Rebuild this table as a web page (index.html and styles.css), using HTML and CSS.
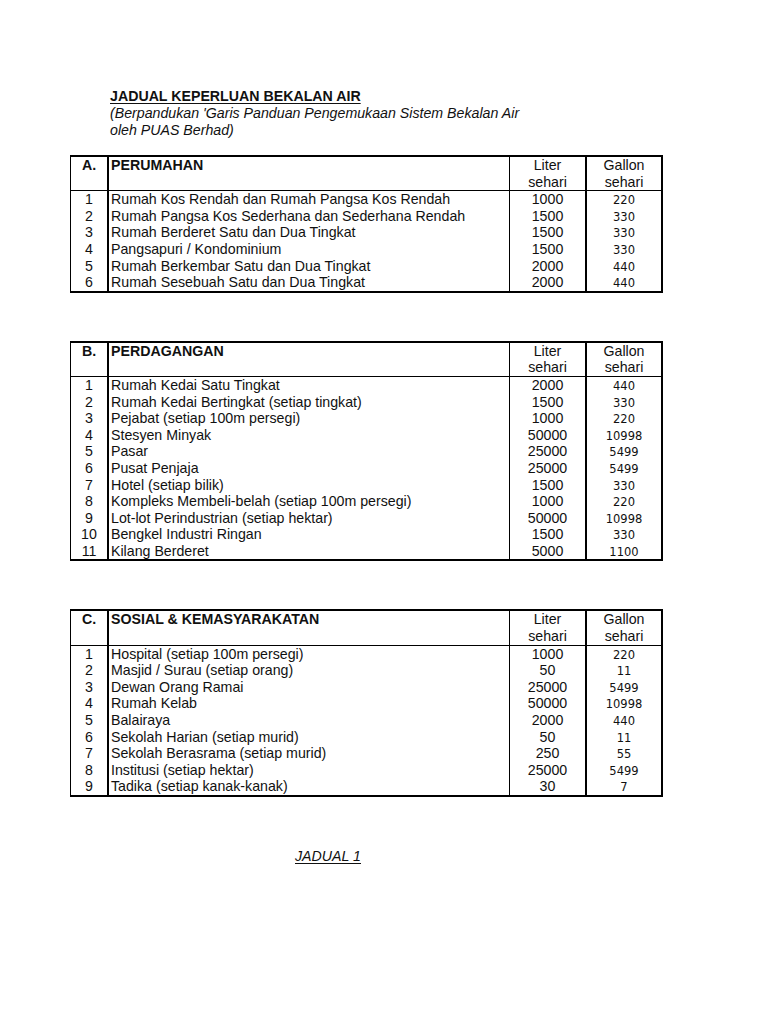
FILE: index.html
```html
<!DOCTYPE html>
<html lang="ms">
<head>
<meta charset="utf-8">
<title>Jadual Keperluan Bekalan Air</title>
<link rel="stylesheet" href="styles.css">
</head>
<body>
<div class="page">
  <div class="intro">
    <div class="title">JADUAL KEPERLUAN BEKALAN AIR</div>
    <div class="subtitle">(Berpandukan 'Garis Panduan Pengemukaan Sistem Bekalan Air<br>oleh PUAS Berhad)</div>
  </div>

  <table class="water">
    <thead>
      <tr>
        <th class="num">A.</th>
        <th class="desc">PERUMAHAN</th>
        <td class="lit">Liter<br>sehari</td>
        <td class="gal-h">Gallon<br>sehari</td>
      </tr>
    </thead>
    <tbody>
      <tr><td class="num">1</td><td class="desc">Rumah Kos Rendah dan Rumah Pangsa Kos Rendah</td><td class="lit">1000</td><td class="gal">220</td></tr>
      <tr><td class="num">2</td><td class="desc">Rumah Pangsa Kos Sederhana dan Sederhana Rendah</td><td class="lit">1500</td><td class="gal">330</td></tr>
      <tr><td class="num">3</td><td class="desc">Rumah Berderet Satu dan Dua Tingkat</td><td class="lit">1500</td><td class="gal">330</td></tr>
      <tr><td class="num">4</td><td class="desc">Pangsapuri / Kondominium</td><td class="lit">1500</td><td class="gal">330</td></tr>
      <tr><td class="num">5</td><td class="desc">Rumah Berkembar Satu dan Dua Tingkat</td><td class="lit">2000</td><td class="gal">440</td></tr>
      <tr><td class="num">6</td><td class="desc">Rumah Sesebuah Satu dan Dua Tingkat</td><td class="lit">2000</td><td class="gal">440</td></tr>
    </tbody>
  </table>

  <table class="water">
    <thead>
      <tr>
        <th class="num">B.</th>
        <th class="desc">PERDAGANGAN</th>
        <td class="lit">Liter<br>sehari</td>
        <td class="gal-h">Gallon<br>sehari</td>
      </tr>
    </thead>
    <tbody>
      <tr><td class="num">1</td><td class="desc">Rumah Kedai Satu Tingkat</td><td class="lit">2000</td><td class="gal">440</td></tr>
      <tr><td class="num">2</td><td class="desc">Rumah Kedai Bertingkat (setiap tingkat)</td><td class="lit">1500</td><td class="gal">330</td></tr>
      <tr><td class="num">3</td><td class="desc">Pejabat (setiap 100m persegi)</td><td class="lit">1000</td><td class="gal">220</td></tr>
      <tr><td class="num">4</td><td class="desc">Stesyen Minyak</td><td class="lit">50000</td><td class="gal">10998</td></tr>
      <tr><td class="num">5</td><td class="desc">Pasar</td><td class="lit">25000</td><td class="gal">5499</td></tr>
      <tr><td class="num">6</td><td class="desc">Pusat Penjaja</td><td class="lit">25000</td><td class="gal">5499</td></tr>
      <tr><td class="num">7</td><td class="desc">Hotel (setiap bilik)</td><td class="lit">1500</td><td class="gal">330</td></tr>
      <tr><td class="num">8</td><td class="desc">Kompleks Membeli-belah (setiap 100m persegi)</td><td class="lit">1000</td><td class="gal">220</td></tr>
      <tr><td class="num">9</td><td class="desc">Lot-lot Perindustrian (setiap hektar)</td><td class="lit">50000</td><td class="gal">10998</td></tr>
      <tr><td class="num">10</td><td class="desc">Bengkel Industri Ringan</td><td class="lit">1500</td><td class="gal">330</td></tr>
      <tr><td class="num">11</td><td class="desc">Kilang Berderet</td><td class="lit">5000</td><td class="gal">1100</td></tr>
    </tbody>
  </table>

  <table class="water">
    <thead>
      <tr>
        <th class="num">C.</th>
        <th class="desc">SOSIAL &amp; KEMASYARAKATAN</th>
        <td class="lit">Liter<br>sehari</td>
        <td class="gal-h">Gallon<br>sehari</td>
      </tr>
    </thead>
    <tbody>
      <tr><td class="num">1</td><td class="desc">Hospital (setiap 100m persegi)</td><td class="lit">1000</td><td class="gal">220</td></tr>
      <tr><td class="num">2</td><td class="desc">Masjid / Surau (setiap orang)</td><td class="lit">50</td><td class="gal">11</td></tr>
      <tr><td class="num">3</td><td class="desc">Dewan Orang Ramai</td><td class="lit">25000</td><td class="gal">5499</td></tr>
      <tr><td class="num">4</td><td class="desc">Rumah Kelab</td><td class="lit">50000</td><td class="gal">10998</td></tr>
      <tr><td class="num">5</td><td class="desc">Balairaya</td><td class="lit">2000</td><td class="gal">440</td></tr>
      <tr><td class="num">6</td><td class="desc">Sekolah Harian (setiap murid)</td><td class="lit">50</td><td class="gal">11</td></tr>
      <tr><td class="num">7</td><td class="desc">Sekolah Berasrama (setiap murid)</td><td class="lit">250</td><td class="gal">55</td></tr>
      <tr><td class="num">8</td><td class="desc">Institusi (setiap hektar)</td><td class="lit">25000</td><td class="gal">5499</td></tr>
      <tr><td class="num">9</td><td class="desc">Tadika (setiap kanak-kanak)</td><td class="lit">30</td><td class="gal">7</td></tr>
    </tbody>
  </table>

  <div class="caption">JADUAL 1</div>
</div>
</body>
</html>
```

FILE: styles.css
```css
html, body {
  margin: 0;
  padding: 0;
  background: #ffffff;
}

body {
  font-family: "Liberation Sans", Arial, sans-serif;
  font-size: 14.2px;
  color: #111111;
}

.page {
  padding: 88px 0 0 70px;
}

.intro {
  margin-left: 40px;
  line-height: 17px;
}

.title {
  font-weight: bold;
  text-decoration: underline;
  text-underline-offset: 2px;
}

.subtitle {
  font-style: italic;
}

.water {
  margin-top: 16px;
  margin-bottom: 48px;
  width: 593px;
  table-layout: fixed;
  border-collapse: separate;
  border-spacing: 0;
  border-top: 2px solid #000;
  border-bottom: 2px solid #000;
  border-left: 1px solid #000;
  border-right: 2px solid #000;
}

.water + .water {
  margin-top: 0;
}

.water th,
.water td {
  box-sizing: border-box;
  padding: 0;
  line-height: 16.6px;
  font-weight: normal;
  vertical-align: middle;
  white-space: nowrap;
}

.water thead th,
.water thead td {
  vertical-align: top;
  border-bottom: 1px solid #000;
}

.water thead th {
  font-weight: bold;
}

.num {
  width: 38px;
  text-align: center;
  border-right: 2px solid #000;
}

.desc {
  width: 401px;
  text-align: left;
  padding-left: 2px !important;
  border-right: 1px solid #000;
}

.lit {
  width: 77px;
  text-align: center;
  border-right: 2px solid #000;
}

.gal-h {
  width: 74px;
  text-align: center;
}

.water .gal {
  text-align: center;
  font-family: "DejaVu Sans", Verdana, sans-serif;
  font-size: 11.5px;
  padding-top: 2px;
  line-height: 14.6px;
}

.caption {
  margin: 0 0 0 225px;
  padding-top: 3px;
  font-style: italic;
  text-decoration: underline;
  text-underline-offset: 2px;
  line-height: 17px;
}
```
